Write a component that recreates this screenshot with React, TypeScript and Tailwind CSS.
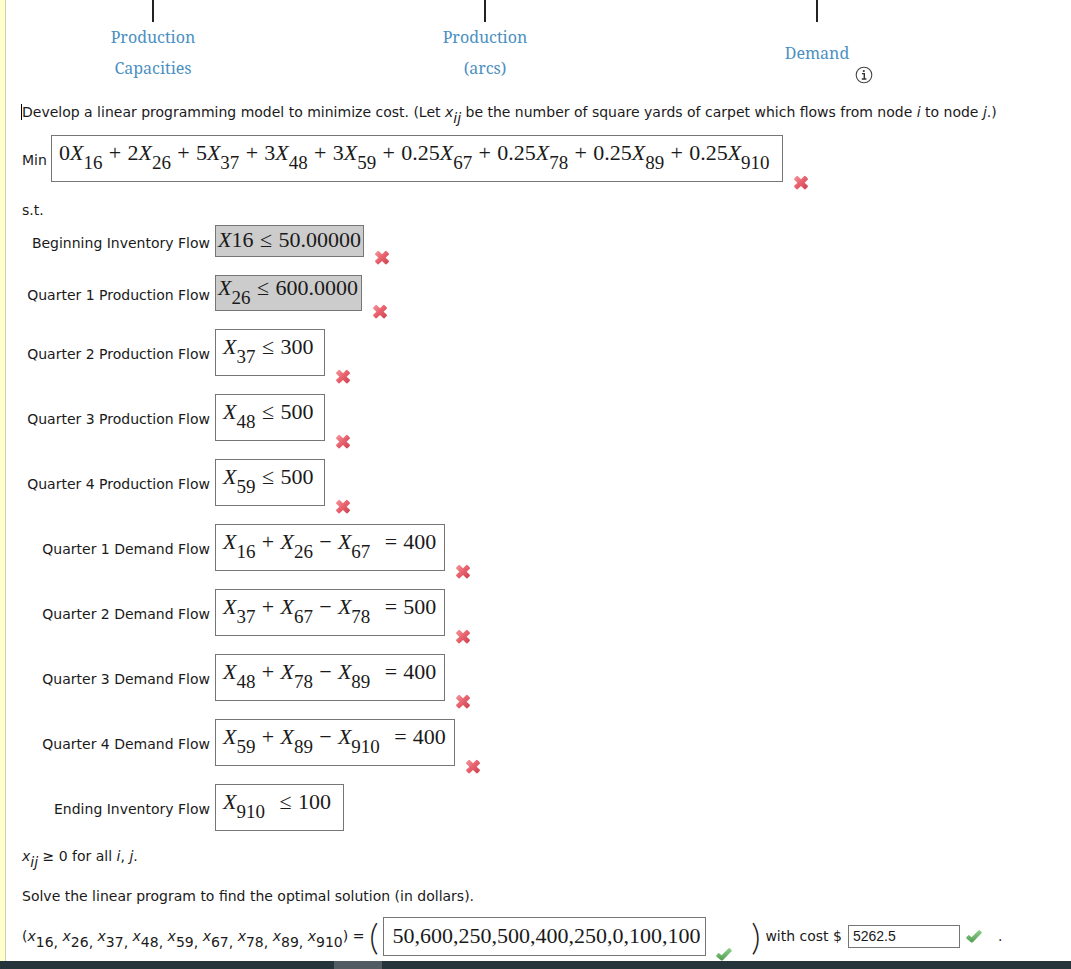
import React, { useId } from "react";

type Part =
  | { kind: "text"; value: string }
  | { kind: "var"; sub?: string; coef?: string; wide?: boolean }
  | { kind: "op"; value: string };

const t = (value: string): Part => ({ kind: "text", value });
const v = (sub: string, coef?: string): Part => ({ kind: "var", sub, coef });
const op = (value: string): Part => ({ kind: "op", value });
const w = (sub: string): Part => ({ kind: "var", sub, wide: true });

const objective: Part[] = [
  v("16", "0"), op("+"), v("26", "2"), op("+"), v("37", "5"), op("+"),
  v("48", "3"), op("+"), v("59", "3"), op("+"), v("67", "0.25"), op("+"),
  v("78", "0.25"), op("+"), v("89", "0.25"), op("+"), v("910", "0.25"),
];

type Row = { label: string; parts: Part[]; size: string; mark: boolean };

const open = "h-[47px] border-[#767676] bg-white px-[7px] pt-[3px] leading-7";

const rows: Row[] = [
  { label: "Beginning Inventory Flow", parts: [{ kind: "var", coef: "" }, t("16"), op("≤"), t("50.00000")], size: "h-8 w-[149px] border-[#767676] bg-[#cccccc] px-[2px] leading-7", mark: true },
  { label: "Quarter 1 Production Flow", parts: [v("26"), op("≤"), t("600.0000")], size: "h-9 w-[147px] border-[#767676] bg-[#cccccc] px-[2px] leading-6", mark: true },
  { label: "Quarter 2 Production Flow", parts: [v("37"), op("≤"), t("300")], size: `${open} w-[110px]`, mark: true },
  { label: "Quarter 3 Production Flow", parts: [v("48"), op("≤"), t("500")], size: `${open} w-[110px]`, mark: true },
  { label: "Quarter 4 Production Flow", parts: [v("59"), op("≤"), t("500")], size: `${open} w-[110px]`, mark: true },
  { label: "Quarter 1 Demand Flow", parts: [v("16"), op("+"), v("26"), op("−"), w("67"), op("="), t("400")], size: `${open} w-[230px]`, mark: true },
  { label: "Quarter 2 Demand Flow", parts: [v("37"), op("+"), v("67"), op("−"), w("78"), op("="), t("500")], size: `${open} w-[230px]`, mark: true },
  { label: "Quarter 3 Demand Flow", parts: [v("48"), op("+"), v("78"), op("−"), w("89"), op("="), t("400")], size: `${open} w-[230px]`, mark: true },
  { label: "Quarter 4 Demand Flow", parts: [v("59"), op("+"), v("89"), op("−"), w("910"), op("="), t("400")], size: `${open} w-[240px]`, mark: true },
  { label: "Ending Inventory Flow", parts: [w("910"), op("≤"), t("100")], size: `${open} w-[129px]`, mark: false },
];

const solution = ["16", "26", "37", "48", "59", "67", "78", "89", "910"];

function Cross() {
  return (
    <svg role="img" aria-label="Incorrect" viewBox="0 0 16 16" className="size-4 shrink-0">
      <defs>
        <linearGradient id="cross" x1="0" y1="0" x2="1" y2="1">
          <stop offset="0" stopColor="#f59a9f" />
          <stop offset="0.5" stopColor="#e8606c" />
          <stop offset="1" stopColor="#c9424f" />
        </linearGradient>
      </defs>
      <path
        d="M1.2 4.4 3.6 2 Q4.3 1.5 5 2.2L8 5.2 11 2.2Q11.7 1.5 12.4 2L14.8 4.4Q15.3 5.1 14.7 5.8L11.6 8.7 14.6 11.6Q15.3 12.3 14.7 13L12.5 15.2Q11.8 15.7 11.1 15.1L8 12.1 4.9 15.1Q4.2 15.7 3.5 15.2L1.3 13Q.7 12.3 1.4 11.6L4.4 8.7 1.3 5.8Q.7 5.1 1.2 4.4Z"
        fill="url(#cross)"
      />
    </svg>
  );
}

function Tick() {
  return (
    <svg role="img" aria-label="Correct" viewBox="0 0 16 16" className="size-4 shrink-0">
      <defs>
        <linearGradient id="tick" x1="0" y1="0" x2="0" y2="1">
          <stop offset="0" stopColor="#8fce8c" />
          <stop offset="1" stopColor="#4f9f50" />
        </linearGradient>
      </defs>
      <path
        d="M.3 9.6 2 7.5Q2.8 6.8 3.5 7.4L5.6 9.2 12.4 2.4Q13.3 1.6 14 2.4L15.7 4.2Q16 4.8 15.5 5.3L6.8 14.2Q5.8 15 4.9 14.2L.4 10.5Q0 10 .3 9.6Z"
        fill="url(#tick)"
      />
    </svg>
  );
}

function Formula({ parts }: { parts: Part[] }) {
  return (
    <>
      {parts.map((p, i) => {
        if (p.kind === "text") return <span key={i}>{p.value}</span>;
        if (p.kind === "op")
          return (
            <span key={i} className="w-[25px] text-center">
              {p.value}
            </span>
          );
        return (
          <span key={i} className={p.wide ? "flex pr-2" : "flex"}>
            {p.coef}
            <i>X</i>
            {p.sub && <span className="pt-[10px] text-[19px]">{p.sub}</span>}
          </span>
        );
      })}
    </>
  );
}

function MathField({ parts, size, labelId }: { parts: Part[]; size: string; labelId: string }) {
  return (
    <div
      role="textbox"
      tabIndex={0}
      aria-labelledby={labelId}
      className={`mb-2 flex shrink-0 items-start border font-['Liberation_Serif',serif] text-[22px] whitespace-nowrap ${size}`}
    >
      <Formula parts={parts} />
    </div>
  );
}

function ConstraintRow({ row }: { row: Row }) {
  const id = useId();
  return (
    <div className="flex items-end">
      <div id={id} className="w-[188px] shrink-0 self-center pb-[5px] text-right whitespace-nowrap">
        {row.label}
      </div>
      <div className="ml-[5px] flex items-end gap-[10px]">
        <MathField parts={row.parts} size={row.size} labelId={id} />
        {row.mark && <Cross />}
      </div>
    </div>
  );
}

function Column({ lines }: { lines: string[] }) {
  return (
    <div className="flex w-[76px] flex-col items-center">
      <div className="h-[22px] w-[2px] bg-[#222222]" />
      <div className="flex h-[62px] flex-col items-center justify-center">
        {lines.map((line) => (
          <span key={line} className="leading-[31px] whitespace-nowrap">
            {line}
          </span>
        ))}
      </div>
    </div>
  );
}

function Sub({ children }: { children: React.ReactNode }) {
  return <span className="inline-block translate-y-[6px] text-sm leading-none">{children}</span>;
}

export default function App() {
  return (
    <div className="min-h-screen border-l-[5px] border-[#ffffcc] bg-white font-['DejaVu_Sans',sans-serif] text-sm leading-5 text-[#1a1a1a]">
      <main className="min-h-screen overflow-hidden border-l border-[#cfcfb4] pl-4">
        <div className="flex items-end pl-[93px]">
          <div className="flex gap-[256px] font-['Noto_Serif','DejaVu_Serif',serif] text-base text-[#4a90c2]">
            <Column lines={["Production", "Capacities"]} />
            <Column lines={["Production", "(arcs)"]} />
            <Column lines={["Demand"]} />
          </div>
          <button type="button" aria-label="Information" className="flex">
            <svg viewBox="0 0 18 18" className="size-[18px]" fill="none">
              <circle cx="9" cy="9" r="7.8" stroke="#444" strokeWidth="1.1" />
              <circle cx="8.8" cy="5" r="1.1" fill="#333" />
              <path d="M7 7.6h2.3v5.2M6.8 13h4.6" stroke="#333" strokeWidth="1.4" />
            </svg>
          </button>
        </div>

        <p className="-ml-px mt-[18px] whitespace-nowrap">
          <span className="border-l border-black">Develop</span> a linear programming model to minimize cost. (Let <i>x</i>
          <Sub><i>ij</i></Sub> be the number of square yards of carpet which flows from node <i>i</i> to node <i>j</i>.)
        </p>

        <div className="mt-[13px] flex items-end">
          <div id="objective" className="w-[29px] shrink-0 self-center pb-[5px]">Min</div>
          <div className="flex items-end gap-[10px]">
            <MathField parts={objective} size={`${open} w-[732px]`} labelId="objective" />
            <Cross />
          </div>
        </div>

        <p className="mt-[10px]">s.t.</p>

        <div className="mt-[5px] flex flex-col gap-[10px]">
          {rows.map((row) => (
            <ConstraintRow key={row.label} row={row} />
          ))}
        </div>

        <p className="mt-[7px]">
          <i>x</i><Sub><i>ij</i></Sub> ≥ 0 for all <i>i</i>, <i>j</i>.
        </p>

        <p className="mt-5">Solve the linear program to find the optimal solution (in dollars).</p>

        <div className="mt-[10px] flex h-10 items-center whitespace-nowrap">
          <label htmlFor="solution">
            (
            {solution.map((s, i) => (
              <span key={s}>
                <i>x</i>
                <Sub>{s}{i < solution.length - 1 && ","}</Sub>
                {i < solution.length - 1 && " "}
              </span>
            ))}
            ) =
          </label>
          <span className="w-[19px] text-center font-['Lato',sans-serif] text-4xl leading-9 font-light">(</span>
          <input
            id="solution"
            defaultValue="50,600,250,500,400,250,0,100,100"
            className="h-[39px] w-[323px] shrink-0 border border-[#767676] pl-2 font-['Liberation_Serif',serif] text-[22px]"
          />
          <div className="ml-[10px] flex h-[46px] items-end self-start">
            <Tick />
          </div>
          <span className="ml-[14px] w-[19px] text-center font-['Lato',sans-serif] text-4xl leading-9 font-light">)</span>
          <label htmlFor="cost">with cost $</label>
          <input
            id="cost"
            defaultValue="5262.5"
            className="ml-[6px] h-[23px] w-28 shrink-0 border border-[#767676] px-1 font-['Liberation_Sans',sans-serif] text-sm"
          />
          <div className="ml-[6px]"><Tick /></div>
          <span className="ml-4">.</span>
        </div>
      </main>
      <div className="fixed inset-x-0 bottom-0 h-2 bg-[#25343b]">
        <div className="ml-[334px] h-2 w-12 bg-[#505c62]" />
      </div>
    </div>
  );
}
